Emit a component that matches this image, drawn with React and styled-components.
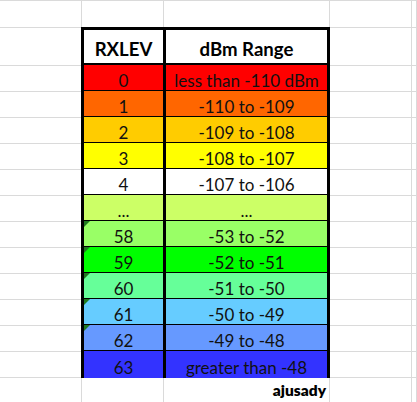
import React from "react";
import styled, { createGlobalStyle } from "styled-components";

const GlobalStyle = createGlobalStyle`
  html, body {
    margin: 0;
    padding: 0;
    background: #ffffff;
  }
  body {
    width: 417px;
    height: 402px;
    overflow: hidden;
    font-family: "Lato", "Liberation Sans", sans-serif;
  }
`;

const rows = [
  { level: "0", range: "less than -110 dBm", color: "#ff0000" },
  { level: "1", range: "-110 to -109", color: "#ff6600" },
  { level: "2", range: "-109 to -108", color: "#ffcc00" },
  { level: "3", range: "-108 to -107", color: "#ffff00" },
  { level: "4", range: "-107 to -106", color: "#ffffff" },
  { level: "...", range: "...", color: "#ccff66" },
  { level: "58", range: "-53 to -52", color: "#99ff66", flag: true },
  { level: "59", range: "-52 to -51", color: "#00ff00", flag: true },
  { level: "60", range: "-51 to -50", color: "#66ff99", flag: true },
  { level: "61", range: "-50 to -49", color: "#66ccff", flag: true },
  { level: "62", range: "-49 to -48", color: "#6699ff", flag: true },
  { level: "63", range: "greater than -48", color: "#3333ff" },
];

// empty spreadsheet cells around the table (row, column)
const blankCells = [];
for (let c = 1; c <= 5; c++) blankCells.push([1, c]);
for (let r = 2; r <= 14; r++) for (let c of [1, 4, 5]) blankCells.push([r, c]);
for (let c of [1, 2, 4, 5]) blankCells.push([15, c]);
for (let c = 1; c <= 5; c++) blankCells.push([16, c]);

function App() {
  return (
    <>
      <GlobalStyle />
      <Sheet>
        {blankCells.map(([row, col]) => (
          <GridCell key={`${row}-${col}`} row={row} col={col} />
        ))}
        <Table>
          <HeaderCell first>RXLEV</HeaderCell>
          <HeaderCell>dBm Range</HeaderCell>
          {rows.map((r, i) => (
            <React.Fragment key={r.level + i}>
              <DataCell
                first
                bg={r.color}
                last={i === rows.length - 1}
                flag={r.flag}
              >
                {r.level}
              </DataCell>
              <DataCell bg={r.color} last={i === rows.length - 1}>
                {r.range}
              </DataCell>
            </React.Fragment>
          ))}
        </Table>
        <SignCell>ajusady</SignCell>
      </Sheet>
    </>
  );
}

const Sheet = styled.div`
  width: 417px;
  height: 402px;
  display: grid;
  grid-template-columns: 82px 82px 166px 82px 1fr;
  grid-template-rows: 27px 38px repeat(12, 26px) 26px 1fr;
  border-top: 1px solid #dadada;
  box-sizing: border-box;
  overflow: hidden;
`;

const GridCell = styled.div`
  grid-row: ${(p) => p.row};
  grid-column: ${(p) => p.col};
  border-right: 1px solid #dadada;
  border-bottom: 1px solid #dadada;
  box-sizing: border-box;
`;

const Table = styled.div`
  grid-row: 2 / 15;
  grid-column: 2 / 4;
  margin-top: -1px;
  margin-left: -1px;
  display: grid;
  grid-template-columns: 82px 1fr;
  grid-template-rows: 35px repeat(11, 26px) 1fr;
  border: 3px solid #000;
  box-sizing: border-box;
  color: #000;
`;

const HeaderCell = styled.div`
  display: flex;
  align-items: center;
  justify-content: center;
  padding-top: 5px;
  box-sizing: border-box;
  font-weight: 700;
  font-size: 18.6px;
  background: #ffffff;
  border-bottom: 2px solid #000;
  border-right: ${(p) => (p.first ? "3px solid #000" : "none")};
`;

const DataCell = styled.div`
  position: relative;
  display: flex;
  align-items: center;
  justify-content: center;
  padding-top: 6px;
  box-sizing: border-box;
  font-size: 17px;
  color: #111;
  background: ${(p) => p.bg};
  border-bottom: ${(p) => (p.last ? "none" : "1px solid #000")};
  border-right: ${(p) => (p.first ? "3px solid #000" : "none")};

  ${(p) =>
    p.flag &&
    `
    &::before {
      content: "";
      position: absolute;
      top: 0;
      left: 0;
      border-top: 6px solid #1f7a1f;
      border-right: 6px solid transparent;
    }
  `}
`;

const SignCell = styled.div`
  grid-row: 15;
  grid-column: 3;
  display: flex;
  align-items: flex-end;
  justify-content: flex-end;
  padding: 0 3px 4px 0;
  border-right: 1px solid #dadada;
  border-bottom: 1px solid #dadada;
  box-sizing: border-box;
  font-weight: 800;
  font-size: 15.5px;
  color: #000;
`;

export default App;
